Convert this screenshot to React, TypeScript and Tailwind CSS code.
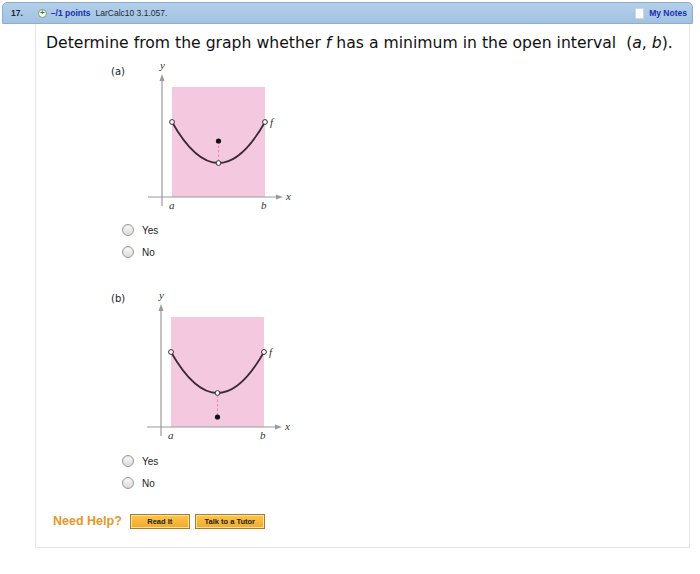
import React from "react";

function Graph({ below }: { below?: boolean }) {
  const dotY = below ? 127 : 81;
  return (
    <svg width="160" height="158" viewBox="0 0 160 158" className="block">
      <rect x="32" y="27" width="93" height="110" fill="#f4c9df" />
      <line x1="22" y1="18" x2="22" y2="146" stroke="#9a9a9a" strokeWidth="1.2" />
      <path d="M22 14 L19.5 21 L24.5 21 Z" fill="#9a9a9a" />
      <line x1="8" y1="137" x2="139" y2="137" stroke="#9a9a9a" strokeWidth="1.2" />
      <path d="M143 137 L136 134.5 L136 139.5 Z" fill="#9a9a9a" />
      <text x="20" y="9" fontFamily="'Liberation Serif', serif" fontStyle="italic" fontSize="11" fill="#333">y</text>
      <text x="146" y="140" fontFamily="'Liberation Serif', serif" fontStyle="italic" fontSize="11" fill="#333">x</text>
      <text x="29" y="149" fontFamily="'Liberation Serif', serif" fontStyle="italic" fontSize="11" fill="#333">a</text>
      <text x="121" y="149" fontFamily="'Liberation Serif', serif" fontStyle="italic" fontSize="11" fill="#333">b</text>
      <text x="130" y="66" fontFamily="'Liberation Serif', serif" fontStyle="italic" fontSize="11" fill="#333">f</text>
      <path d="M32 62 Q78.5 144 125 62" fill="none" stroke="#3a2a35" strokeWidth="1.8" />
      <line
        x1="78.5"
        y1={below ? 105 : dotY}
        x2="78.5"
        y2={below ? dotY : 101}
        stroke="#e08aa8"
        strokeWidth="1"
        strokeDasharray="2.5 2"
      />
      <circle cx="32" cy="62" r="2.4" fill="#fff" stroke="#3a2a35" strokeWidth="1" />
      <circle cx="125" cy="62" r="2.4" fill="#fff" stroke="#3a2a35" strokeWidth="1" />
      <circle cx="78.5" cy="103" r="2.4" fill="#fff" stroke="#3a2a35" strokeWidth="1" />
      <circle cx="78.5" cy={dotY} r="2.6" fill="#111" />
    </svg>
  );
}

function Radio({ label }: { label: string }) {
  return (
    <div className="flex items-center h-[22px]">
      <span className="w-[12px] h-[12px] rounded-full border border-[#9a9a9a] bg-gradient-to-b from-[#fdfdfd] to-[#d8d8d8] shadow-[inset_0_1px_1px_rgba(0,0,0,0.1)]" />
      <span className="ml-[8px] text-[10px] text-[#222] font-['Liberation_Sans',sans-serif]">{label}</span>
    </div>
  );
}

export default function App() {
  return (
    <div className="w-[700px] h-[574px] bg-white relative overflow-hidden font-['Liberation_Sans',sans-serif]">
      <div className="pt-[2px] px-[2px]">
        <div className="h-[22px] mr-[5px] rounded-t-[5px] border border-[#8eaed0] bg-gradient-to-b from-[#b2cfea] to-[#a3c2e2] flex items-center text-[8.5px] font-['Liberation_Sans',sans-serif]">
          <span className="ml-[8px] font-bold text-[#1d2a3a]">17.</span>
          <span className="ml-[15px] w-[9px] h-[9px] rounded-full bg-white border border-[#7a9a6a] flex items-center justify-center text-[8px] leading-none font-bold text-[#2d7a2d]">+</span>
          <span className="ml-[4px] font-bold text-[#1a2fb0]">–/1 points</span>
          <span className="ml-[5px] text-[#1d2a3a]">LarCalc10 3.1.057.</span>
          <span className="ml-auto flex items-center mr-[5px]">
            <span className="w-[9px] h-[11px] bg-white border border-[#cfd8e2] mr-[5px]" />
            <span className="font-bold text-[#1a2fb0]">My Notes</span>
          </span>
        </div>
      </div>
      <div className="ml-[35px] mr-[10px] h-[524px] border-l border-r border-b border-[#e6e6e6]">
        <div className="pl-[10px] pt-[9px] text-[15.65px] leading-[20px] text-[#111] font-['DejaVu_Sans',sans-serif]">
          Determine from the graph whether <i>f</i> has a minimum in the open interval&nbsp; (<i>a</i>, <i>b</i>).
        </div>
        <div className="relative h-[240px]">
          <div className="absolute left-[75px] top-[11px] text-[10px] text-[#222] font-['DejaVu_Sans',sans-serif]">(a)</div>
          <div className="absolute left-[104px] top-[7px]">
            <Graph />
          </div>
          <div className="absolute left-[86px] top-[166px]">
            <Radio label="Yes" />
            <Radio label="No" />
          </div>
        </div>
        <div className="relative h-[190px]">
          <div className="absolute left-[75px] top-[-2px] text-[10px] text-[#222] font-['DejaVu_Sans',sans-serif]">(b)</div>
          <div className="absolute left-[103px] top-[-3px]">
            <Graph below />
          </div>
          <div className="absolute left-[86px] top-[157px]">
            <Radio label="Yes" />
            <Radio label="No" />
          </div>
        </div>
        <div className="flex items-center pl-[17px] mt-[29px]">
          <span className="text-[12.5px] font-bold text-[#e8962a] font-['Liberation_Sans',sans-serif]">Need Help?</span>
          <span className="ml-[8px] w-[60px] h-[15px] border border-[#b07a20] bg-gradient-to-b from-[#fbc64a] to-[#f3a92a] shadow-[inset_0_0_0_1px_#fde2a0] flex items-center justify-center text-[7.5px] font-bold text-[#222]">Read It</span>
          <span className="ml-[5px] w-[70px] h-[15px] border border-[#b07a20] bg-gradient-to-b from-[#fbc64a] to-[#f3a92a] shadow-[inset_0_0_0_1px_#fde2a0] flex items-center justify-center text-[7.5px] font-bold text-[#222]">Talk to a Tutor</span>
        </div>
      </div>
    </div>
  );
}
